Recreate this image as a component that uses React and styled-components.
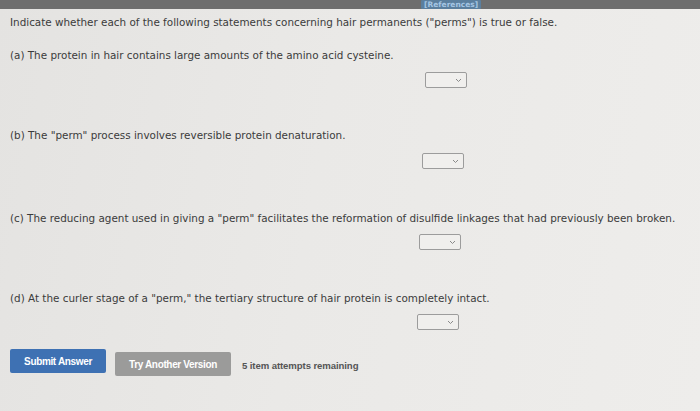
import React from "react";
import styled, { createGlobalStyle } from "styled-components";

const Global = createGlobalStyle`
  html, body { margin: 0; padding: 0; }
  body {
    width: 700px; height: 411px; overflow: hidden;
    background: #e8e7e5;
    font-family: "DejaVu Sans", Verdana, sans-serif;
  }
`;

const Page = styled.div`
  width: 700px;
  height: 411px;
  display: flex;
  flex-direction: column;
  background: linear-gradient(100deg, #e4e3e1 0%, #eae9e7 45%, #eeedeb 100%);
`;

const TopBar = styled.div`
  height: 9px;
  background: #6e6e6e;
  display: flex;
  align-items: flex-end;
  padding-left: 421px;
  overflow: hidden;
`;

const RefLink = styled.span`
  display: block;
  height: 9px;
  line-height: 9px;
  padding: 0 3px;
  font-size: 7.5px;
  font-weight: bold;
  color: #a5c6e4;
  background: #5b7f9e;
  border-radius: 1px;
`;

const Content = styled.div`
  padding: 6px 10px 0 10px;
  display: flex;
  flex-direction: column;
  color: #3b3b3b;
  font-size: 10.4px;
`;

const Heading = styled.div`
  line-height: 14px;
  white-space: nowrap;
`;

const Question = styled.div`
  display: flex;
  flex-direction: column;
  margin-top: ${(p) => p.$top}px;
`;

const QText = styled.div`
  line-height: 14px;
  white-space: nowrap;
`;

const Select = styled.div`
  margin-top: ${(p) => p.$gap}px;
  margin-left: ${(p) => p.$left}px;
  width: 36px;
  height: 14px;
  border: 1px solid #9c9c9c;
  border-radius: 2px;
  background: #f0efed;
  display: flex;
  align-items: center;
  justify-content: flex-end;
  padding-right: 4px;
  box-sizing: content-box;
`;

const Actions = styled.div`
  display: flex;
  align-items: flex-start;
  margin-top: 19px;
`;

const Button = styled.div`
  height: 24px;
  display: flex;
  align-items: center;
  justify-content: center;
  color: #fff;
  background: ${(p) => p.$bg};
  border-radius: 2px;
  font-family: "Liberation Sans", Arial, sans-serif;
  font-weight: bold;
  font-size: 10px;
  letter-spacing: -0.35px;
  margin-top: ${(p) => p.$top || 0}px;
  margin-right: 9px;
  width: ${(p) => p.$w}px;
  box-sizing: border-box;
`;

const Attempts = styled.div`
  margin-top: 11px;
  margin-left: 2px;
  font-family: "Liberation Sans", Arial, sans-serif;
  font-weight: bold;
  font-size: 9.6px;
  color: #555;
  letter-spacing: -0.1px;
  line-height: 12px;
`;

const Chevron = () => (
  <svg width="7" height="5" viewBox="0 0 7 5">
    <path d="M1 1 L3.5 3.5 L6 1" fill="none" stroke="#8a8a8a" strokeWidth="1" />
  </svg>
);

const questions = [
  { text: "(a) The protein in hair contains large amounts of the amino acid cysteine.", top: 19, gap: 10, left: 415 },
  { text: "(b) The \"perm\" process involves reversible protein denaturation.", top: 40, gap: 11, left: 412 },
  { text: "(c) The reducing agent used in giving a \"perm\" facilitates the reformation of disulfide linkages that had previously been broken.", top: 42, gap: 9, left: 409 },
  { text: "(d) At the curler stage of a \"perm,\" the tertiary structure of hair protein is completely intact.", top: 41, gap: 9, left: 407 },
];

export default function App() {
  return (
    <>
      <Global />
      <Page>
        <TopBar>
          <RefLink>[References]</RefLink>
        </TopBar>
        <Content>
          <Heading>
            Indicate whether each of the following statements concerning hair permanents ("perms") is true or false.
          </Heading>
          {questions.map((q, i) => (
            <Question key={i} $top={q.top}>
              <QText>{q.text}</QText>
              <Select $gap={q.gap} $left={q.left}>
                <Chevron />
              </Select>
            </Question>
          ))}
          <Actions>
            <Button $bg="#3e71b3" $w={96} $top={0}>Submit Answer</Button>
            <Button $bg="#9b9b9a" $w={116} $top={3}>Try Another Version</Button>
            <Attempts>5 item attempts remaining</Attempts>
          </Actions>
        </Content>
      </Page>
    </>
  );
}
